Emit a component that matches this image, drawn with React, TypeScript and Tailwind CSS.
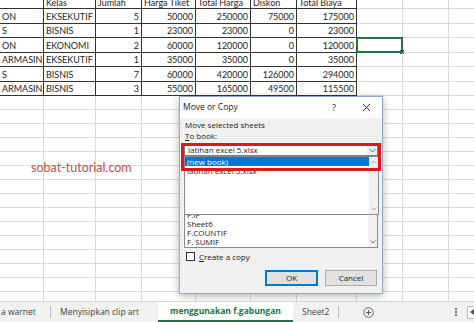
const colWidths = [44, 52, 46, 54, 55, 46, 60, 46, 46]

const header = ['', 'Kelas', 'Jumlah', 'Harga Tiket', 'Total Harga', 'Diskon', 'Total Biaya']

const rows = [
    ['ON', 'EKSEKUTIF', '5', '50000', '250000', '75000', '175000'],
    ['S', 'BISNIS', '1', '23000', '23000', '0', '23000'],
    ['ON', 'EKONOMI', '2', '60000', '120000', '0', '120000'],
    ['ARMASIN', 'EKSEKUTIF', '1', '35000', '35000', '0', '35000'],
    ['S', 'BISNIS', '7', '60000', '420000', '126000', '294000'],
    ['ARMASIN', 'BISNIS', '3', '55000', '165000', '49500', '115500'],
]

const rowHeights = [15, 14, 15, 14, 15, 14]

function EmptyCells({from}: {from: number}) {
    return (
        <>
            {colWidths.slice(from).map((w, i) => (
                <div key={i} style={{width: w}} className="h-full shrink-0 border-r border-b border-[#dadada]"/>
            ))}
            <div className="h-full flex-1 border-b border-[#dadada]"/>
        </>
    )
}

function Sheet() {
    return (
        <div className="relative h-[301px] overflow-hidden bg-white font-['Lato',sans-serif] text-[9px] text-[#1e1e1e]">

            {/*HEADER ROW (cut at top)*/}
            <div className="flex h-[9px]">
                {header.map((h, i) => (
                    <div key={i} style={{width: colWidths[i]}} className="h-full shrink-0 overflow-hidden border-r border-b border-[#333] pl-[2px]">
                        <div className="-mt-[2px] leading-[9px] whitespace-nowrap">{h}</div>
                    </div>
                ))}
                <EmptyCells from={7}/>
            </div>

            {/*DATA ROWS*/}
            {rows.map((r, ri) => (
                <div key={ri} style={{height: rowHeights[ri]}} className="flex">
                    {r.map((v, ci) => (
                        <div key={ci} style={{width: colWidths[ci]}}
                             className={`flex h-full shrink-0 items-center overflow-hidden whitespace-nowrap border-r border-b border-[#333] leading-none ${ci < 2 ? 'justify-start pl-[2px]' : 'justify-end pr-[2px]'} ${ci === 0 ? 'pl-0' : ''}`}>
                            {v}
                        </div>
                    ))}
                    {colWidths.slice(7).map((w, i) => (
                        <div key={i} style={{width: w}} className="relative h-full shrink-0 border-r border-b border-[#dadada]">
                            {ri === 2 && i === 0 && (
                                <div className="absolute -top-[1px] -left-[1px] -right-[1px] -bottom-[1px] border-2 border-[#217346]">
                                    <div className="absolute -right-[3px] -bottom-[3px] h-[4px] w-[4px] bg-[#217346]"/>
                                </div>
                            )}
                        </div>
                    ))}
                    <div className="h-full flex-1 border-b border-[#dadada]"/>
                </div>
            ))}

            {/*EMPTY GRID*/}
            {Array.from({length: 15}).map((_, i) => (
                <div key={i} className="flex h-[14px]">
                    <EmptyCells from={0}/>
                </div>
            ))}

            {/*WATERMARK*/}
            <div className="absolute left-[31px] top-[159px] font-['Lato',sans-serif] text-[12.5px] text-[#d4474a]">sobat-tutorial.com</div>

            {/*DIALOG*/}
            <Dialog/>
        </div>
    )
}

function Dialog() {
    return (
        <div className="absolute left-[179px] top-[96px] flex h-[198px] w-[204px] flex-col border border-[#8eaad2] bg-[#f0f0f0] font-['Open_Sans',sans-serif] text-[8px] text-[#222] shadow-[0_2px_8px_rgba(0,0,0,0.3)]">

            {/*TITLE BAR*/}
            <div className="flex h-[21px] shrink-0 items-center bg-white pl-[3px] text-[8.5px]">
                <span>Move or Copy</span>
                <span className="ml-auto mr-[26px] text-[9px]">?</span>
                <svg width="9" height="9" viewBox="0 0 9 9" className="mr-[11px]">
                    <path d="M1 1 L8 8 M8 1 L1 8" stroke="#333" strokeWidth="1"/>
                </svg>
            </div>

            {/*BODY*/}
            <div className="relative flex flex-1 flex-col px-[4px]">
                <div className="mt-[1px] h-[11px] pl-[1px] leading-[11px]">Move selected sheets</div>
                <div className="h-[11px] pl-[1px] leading-[11px]"><span className="underline">T</span>o book:</div>

                {/*COMBOBOX*/}
                <div className="mt-[3px] flex h-[12px] items-center border border-[#7a7a7a] bg-white pl-[3px]">
                    <span className="flex-1">latihan excel 5.xlsx</span>
                    <div className="flex h-full w-[10px] items-center justify-center bg-[#e5f1fb]">
                        <svg width="7" height="5" viewBox="0 0 7 5"><path d="M0.5 1 L3.5 4 L6.5 1" stroke="#3b7bd0" fill="none"/></svg>
                    </div>
                </div>

                <div className="mt-[4px] h-[11px] pl-[1px] leading-[11px]">Before sheet:</div>

                {/*LISTBOX*/}
                <div className="flex h-[77px] flex-col justify-end overflow-hidden border border-[#8a8a8a] bg-white pl-[2px]">
                    <div className="flex">
                        <div className="flex flex-1 flex-col pb-[1px]">
                            {['Sheet3', 'F.IF', 'Sheet6', 'F.COUNTIF', 'F. SUMIF'].map(s => (
                                <div key={s} className="h-[9px] leading-[9px]">{s}</div>
                            ))}
                        </div>
                        <div className="flex w-[9px] flex-col items-center justify-end bg-[#f0f0f0] pb-[3px]">
                            <svg width="6" height="4" viewBox="0 0 6 4"><path d="M0.5 0.5 L3 3 L5.5 0.5" stroke="#777" fill="none"/></svg>
                        </div>
                    </div>
                </div>

                {/*CHECKBOX*/}
                <div className="mt-[4px] flex h-[9px] items-center">
                    <div className="ml-[2px] h-[9px] w-[9px] border border-[#333] bg-white"/>
                    <span className="ml-[4px]"><span className="underline">C</span>reate a copy</span>
                </div>

                {/*BUTTONS*/}
                <div className="mt-[9px] flex justify-end gap-[7px] pr-[1px]">
                    <button className="flex h-[16px] w-[53px] items-center justify-center border border-[#0078d7] bg-[#e1e1e1] shadow-[inset_0_0_0_1px_#0078d7]">OK</button>
                    <button className="flex h-[16px] w-[52px] items-center justify-center border border-[#adadad] bg-[#e1e1e1]">Cancel</button>
                </div>

                {/*OPEN DROPDOWN*/}
                <div className="absolute left-[4px] top-[38px] flex h-[59px] w-[195px] border border-[#8a8a8a] bg-white">
                    <div className="flex flex-1 flex-col">
                        <div className="h-[9px] bg-[#0078d7] pl-[2px] leading-[9px] text-white">(new book)</div>
                        <div className="h-[9px] pl-[2px] leading-[9px]">latihan excel 5.xlsx</div>
                    </div>
                    <div className="flex w-[9px] flex-col items-center justify-between bg-[#f0f0f0] py-[3px]">
                        <svg width="6" height="4" viewBox="0 0 6 4"><path d="M0.5 3.5 L3 1 L5.5 3.5" stroke="#aaa" fill="none"/></svg>
                        <svg width="6" height="4" viewBox="0 0 6 4"><path d="M0.5 0.5 L3 3 L5.5 0.5" stroke="#aaa" fill="none"/></svg>
                    </div>
                </div>

                {/*RED HIGHLIGHT*/}
                <div className="absolute left-[1px] top-[25px] h-[28px] w-[200px] border-[3px] border-[#e3141c]"/>
            </div>
        </div>
    )
}

function TabBar() {
    return (
        <div className="flex h-[21px] items-center border-t border-[#d4d4d4] bg-[#f1f1f1] font-['Open_Sans',sans-serif] text-[8.5px] text-[#444]">
            <div className="w-[50px] whitespace-nowrap pl-[1px]">a warnet</div>
            <span className="h-[12px] w-px bg-[#bcbcbc]"/>
            <div className="w-[107px] whitespace-nowrap pl-[9px]">Menyisipkan clip art</div>
            <div className="flex h-full w-[135px] items-center justify-center whitespace-nowrap border-b-2 border-[#217346] bg-white font-bold text-[#217346]">
                menggunakan f.gabungan
            </div>
            <div className="w-[45px] whitespace-nowrap pl-[9px]">Sheet2</div>
            <span className="h-[12px] w-px bg-[#bcbcbc]"/>
            <svg width="11" height="11" viewBox="0 0 11 11" className="ml-[24px]">
                <circle cx="5.5" cy="5.5" r="4.8" stroke="#666" fill="none"/>
                <path d="M5.5 3 V8 M3 5.5 H8" stroke="#555"/>
            </svg>
            <div className="flex-1"/>
            <div className="mr-[10px] flex flex-col gap-[1px]">
                <span className="h-[2px] w-[2px] bg-[#777]"/>
                <span className="h-[2px] w-[2px] bg-[#777]"/>
                <span className="h-[2px] w-[2px] bg-[#777]"/>
            </div>
            <div className="flex h-[13px] w-[7px] items-center justify-end border border-r-0 border-[#bbb] bg-white">
                <svg width="4" height="6" viewBox="0 0 4 6"><path d="M4 0 L0 3 L4 6 Z" fill="#555"/></svg>
            </div>
        </div>
    )
}

export default function App() {
    return (
        <div className="h-[322px] w-[474px] overflow-hidden">
            <Sheet/>
            <TabBar/>
        </div>
    )
}
